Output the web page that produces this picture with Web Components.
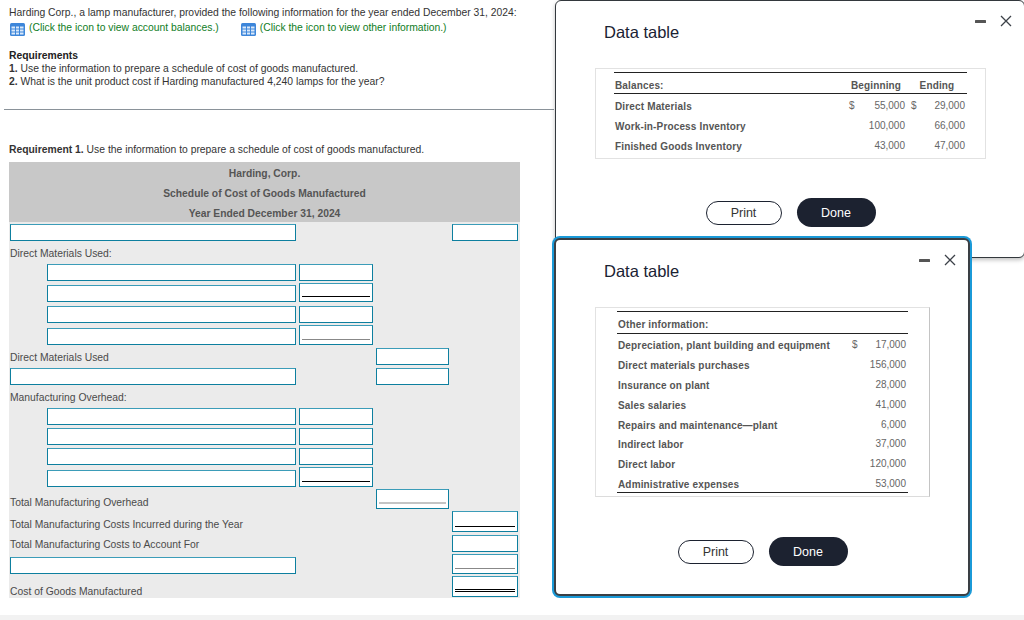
<!DOCTYPE html>
<html lang="en">
<head>
<meta charset="utf-8">
<title>Harding Corp.</title>
<style>
  html, body { margin: 0; height: 620px; overflow: hidden; background: #fff; }
  body { font-family: "Liberation Sans", Arial, sans-serif; position: relative; }
  b { font-weight: bold; }
</style>
</head>
<body>
<problem-pane>
  <span slot="intro">Harding Corp., a lamp manufacturer, provided the following information for the year ended December 31, 2024:</span>
  <info-link slot="link1">(Click the icon to view account balances.)</info-link>
  <info-link slot="link2">(Click the icon to view other information.)</info-link>
  <span slot="req1"><b>1.</b> Use the information to prepare a schedule of cost of goods manufactured.</span>
  <span slot="req2"><b>2.</b> What is the unit product cost if Harding manufactured 4,240 lamps for the year?</span>
  <span slot="req3"><b>Requirement 1.</b> Use the information to prepare a schedule of cost of goods manufactured.</span>

  <schedule-table>
    <span slot="title">Harding, Corp.</span>
    <span slot="title">Schedule of Cost of Goods Manufactured</span>
    <span slot="title">Year Ended December 31, 2024</span>

    <sched-row style="height:19px"><entry-box slot="a"></entry-box><entry-box slot="d"></entry-box></sched-row>
    <sched-row style="height:20px"><sched-label slot="a" style="margin-bottom:0">Direct Materials Used:</sched-label></sched-row>
    <sched-row style="height:20px"><entry-box slot="a" indent></entry-box><entry-box slot="b"></entry-box></sched-row>
    <sched-row style="height:21px"><entry-box slot="a" indent></entry-box><entry-box slot="b" line="single" style="height:19px"></entry-box></sched-row>
    <sched-row style="height:21px"><entry-box slot="a" indent></entry-box><entry-box slot="b"></entry-box></sched-row>
    <sched-row style="height:22px"><entry-box slot="a" indent></entry-box><entry-box slot="b" line="gray" style="height:20px"></entry-box></sched-row>
    <sched-row style="height:20px"><sched-label slot="a" style="margin-bottom:0">Direct Materials Used</sched-label><entry-box slot="c"></entry-box></sched-row>
    <sched-row style="height:20px"><entry-box slot="a"></entry-box><entry-box slot="c"></entry-box></sched-row>
    <sched-row style="height:19px"><sched-label slot="a" style="margin-bottom:-1px">Manufacturing Overhead:</sched-label></sched-row>
    <sched-row style="height:21px"><entry-box slot="a" indent></entry-box><entry-box slot="b"></entry-box></sched-row>
    <sched-row style="height:20px"><entry-box slot="a" indent></entry-box><entry-box slot="b"></entry-box></sched-row>
    <sched-row style="height:20px"><entry-box slot="a" indent></entry-box><entry-box slot="b"></entry-box></sched-row>
    <sched-row style="height:22px"><entry-box slot="a" indent></entry-box><entry-box slot="b" line="single" style="height:20px"></entry-box></sched-row>
    <sched-row style="height:22px"><sched-label slot="a" style="margin-bottom:-1px">Total Manufacturing Overhead</sched-label><entry-box slot="c" line="light" style="height:20px"></entry-box></sched-row>
    <sched-row style="height:23px"><sched-label slot="a" style="margin-bottom:0">Total Manufacturing Costs Incurred during the Year</sched-label><entry-box slot="d" line="single" style="height:21px"></entry-box></sched-row>
    <sched-row style="height:20px"><sched-label slot="a" style="margin-bottom:0">Total Manufacturing Costs to Account For</sched-label><entry-box slot="d"></entry-box></sched-row>
    <sched-row style="height:22px"><entry-box slot="a"></entry-box><entry-box slot="d" line="gray" style="height:20px"></entry-box></sched-row>
    <sched-row style="height:24px"><sched-label slot="a" style="margin-bottom:-1px">Cost of Goods Manufactured</sched-label><entry-box slot="d" line="double" style="height:21px;margin-bottom:1px"></entry-box></sched-row>
  </schedule-table>
</problem-pane>

<data-window style="left:555px;top:0;width:470px;height:258px;--w:391px;--pad:18px;--box-pb:1px;--btn-mt:39px;--cols:235px 62px 56px">
  <data-row head style="--head-h:20px;--head-lh:14px;--head-mb:3px" vals="Beginning;Ending">Balances:</data-row>
  <data-row vals="$|55,000;$|29,000">Direct Materials</data-row>
  <data-row vals="|100,000;|66,000">Work-in-Process Inventory</data-row>
  <data-row vals="|43,000;|47,000">Finished Goods Inventory</data-row>
</data-window>

<data-window focused style="left:554px;top:238px;width:416px;height:358px;--w:335px;--pad:21px;--box-pb:3px;--btn-mt:40px;--cols:235px 56px">
  <data-row head style="--head-h:21px;--head-lh:16px;--head-mb:2px" vals=" ">Other information:</data-row>
  <data-row vals="$|17,000">Depreciation, plant building and equipment</data-row>
  <data-row vals="|156,000">Direct materials purchases</data-row>
  <data-row vals="|28,000">Insurance on plant</data-row>
  <data-row vals="|41,000">Sales salaries</data-row>
  <data-row style="height:19px" vals="|6,000">Repairs and maintenance—plant</data-row>
  <data-row vals="|37,000">Indirect labor</data-row>
  <data-row vals="|120,000">Direct labor</data-row>
  <data-row rule vals="|53,000">Administrative expenses</data-row>
</data-window>

<page-foot></page-foot>

<script>
// left pane: question text and the schedule
class ProblemPane extends HTMLElement {
  constructor() {
    super();
    this.attachShadow({ mode: "open" }).innerHTML = `
      <style>
        :host { display: block; width: 554px; padding: 6px 0 0 9px; box-sizing: border-box;
                font-size: 10.35px; color: #333; }
        .line { line-height: 14px; white-space: nowrap; }
        .links { display: flex; margin: 1px 0 0 1px; line-height: 14px; height: 14px; }
        .links ::slotted(info-link) { margin-right: 22px; }
        .reqs { margin-top: 14px; line-height: 13px; white-space: nowrap; }
        .reqs b { color: #222; }
        hr { border: 0; height: 1px; background: #8a9299; margin: 21px 0 0 -5px; }
        .req1 { margin-top: 33px; line-height: 14px; white-space: nowrap; }
        schedule-slot { display: block; margin: 5px 0 0 0; }
      </style>
      <div class="line"><slot name="intro"></slot></div>
      <div class="links"><slot name="link1"></slot><slot name="link2"></slot></div>
      <div class="reqs">
        <div><b>Requirements</b></div>
        <div><slot name="req1"></slot></div>
        <div><slot name="req2"></slot></div>
      </div>
      <hr>
      <div class="req1"><slot name="req3"></slot></div>
      <schedule-slot><slot></slot></schedule-slot>`;
  }
}

class InfoLink extends HTMLElement {
  constructor() {
    super();
    this.attachShadow({ mode: "open" }).innerHTML = `
      <style>
        :host { display: inline-flex; align-items: flex-start; gap: 4px; color: #0f7d25; white-space: nowrap; }
        svg { display: block; flex: none; margin-top: 2px; }
      </style>
      <svg width="15" height="13" viewBox="0 0 15 13">
        <rect width="15" height="13" rx="1.5" fill="#3d86da"/>
        <path d="M1.5 3.5h3.5v2h-3.5zM6 3.5h3v2h-3zM10 3.5h3.5v2h-3.5zM1.5 6.5h3.5v2h-3.5zM6 6.5h3v2h-3zM10 6.5h3.5v2h-3.5zM1.5 9.5h3.5v2h-3.5zM6 9.5h3v2h-3zM10 9.5h3.5v2h-3.5z" fill="#dbe9fa"/>
      </svg>
      <span><slot></slot></span>`;
  }
}

class ScheduleTable extends HTMLElement {
  constructor() {
    super();
    this.attachShadow({ mode: "open" }).innerHTML = `
      <style>
        :host { display: block; width: 511px; background: #ebebeb; }
        .head { background: #c8c8c8; height: 60px; box-sizing: border-box; padding-top: 1px;
                display: grid; grid-auto-rows: 20px; justify-items: center; align-items: center;
                font-weight: bold; color: #555; font-size: 10.3px; }
        .head ::slotted(span) { display: block; line-height: 20px; padding-top: 1px; }
      </style>
      <div class="head"><slot name="title"></slot></div>
      <slot></slot>`;
  }
}

class SchedRow extends HTMLElement {
  constructor() {
    super();
    this.attachShadow({ mode: "open" }).innerHTML = `
      <style>
        :host { display: grid; grid-template-columns: 286px 74px 73px 66px; column-gap: 3px;
                padding-left: 1px; align-items: end; }
      </style>
      <div><slot name="a"></slot></div>
      <div><slot name="b"></slot></div>
      <div><slot name="c"></slot></div>
      <div><slot name="d"></slot></div>`;
  }
}

class SchedLabel extends HTMLElement {
  constructor() {
    super();
    this.attachShadow({ mode: "open" }).innerHTML = `
      <style>
        :host { display: block; line-height: 14px; white-space: nowrap; color: #4a4a4a; font-size: 10.35px; }
      </style>
      <slot></slot>`;
  }
}

// teal answer box, with the optional underline the form shows inside it
class EntryBox extends HTMLElement {
  constructor() {
    super();
    const line = this.getAttribute("line");
    const rules = {
      single: "border-bottom:1px solid #000;",
      gray: "border-bottom:1px solid #888;",
      light: "border-bottom:2px solid #c4c4c4;",
      double: "border-bottom:3px double #000;"
    };
    this.attachShadow({ mode: "open" }).innerHTML = `
      <style>
        :host { display: block; height: 17px; box-sizing: border-box; background: #fff;
                border: 1px solid #0d7f9f; border-top-color: #3b9cb8; }
        :host([indent]) { margin-left: 37px; }
        div { height: 100%; box-sizing: border-box; margin: 0 2px; padding-bottom: 2px; }
        i { display: block; height: calc(100% - 2px); box-sizing: border-box; ${rules[line] || ""} }
      </style>
      <div><i></i></div>`;
  }
}

class DataWindow extends HTMLElement {
  constructor() {
    super();
    this.attachShadow({ mode: "open" }).innerHTML = `
      <style>
        :host { position: absolute; box-sizing: border-box; background: #fff;
                border: 1px solid #33383d; border-radius: 6px; padding-left: 39px;
                box-shadow: 0 2px 4px rgba(0,0,0,.25); }
        :host([focused]) { border-width: 2px; border-color: #3a3f44;
                box-shadow: 0 0 0 2px #1b9ad8; z-index: 2; }
        .col { width: var(--w); }
        header { display: flex; justify-content: space-between; height: 67px; margin-right: -26px; }
        h2 { margin: 21px 0 0 9px; font-size: 16.5px; line-height: 20px; font-weight: normal; color: #1a2233; }
        .ctl { display: flex; align-items: center; gap: 14px; height: 12px; margin-top: 14px; }
        svg { display: block; }
        .min { margin-top: 1px; }
        .box { border: 1px solid #e2e2e2; padding: 3px var(--pad) var(--box-pb); font-size: 10px; }
        :host([focused]) .box { border-right-color: #c4c4c4; border-bottom-color: #dcdcdc; }
        .btns { display: flex; justify-content: center; align-items: center; gap: 15px; margin-top: var(--btn-mt); }
        button { font: 12.5px "Liberation Sans", Arial, sans-serif; padding: 0; border-radius: 15px; }
        .print { width: 76px; height: 24px; background: #fff; color: #333; border: 1px solid #1c2230; }
        .done { width: 79px; height: 29px; background: #1c2230; color: #fff; border: 0; }
      </style>
      <div class="col">
        <header>
          <h2>Data table</h2>
          <div class="ctl">
            <svg class="min" width="11" height="3" viewBox="0 0 11 3"><rect width="11" height="3" rx=".5" fill="#555"/></svg>
            <svg width="12" height="12" viewBox="0 0 12 12"><path d="M1 1l10 10M11 1L1 11" stroke="#3c4148" stroke-width="1.3" fill="none"/></svg>
          </div>
        </header>
        <div class="box"><slot></slot></div>
        <div class="btns">
          <button class="print">Print</button>
          <button class="done">Done</button>
        </div>
      </div>`;
  }
}

class DataRow extends HTMLElement {
  constructor() {
    super();
    const vals = (this.getAttribute("vals") || "").split(";");
    const cells = vals.map((v) => {
      if (this.hasAttribute("head")) return `<div class="th">${v}</div>`;
      const [sym, num] = v.split("|");
      return `<div class="td"><span>${sym}</span><span>${num}</span></div>`;
    }).join("");
    this.attachShadow({ mode: "open" }).innerHTML = `
      <style>
        :host { display: grid; grid-template-columns: var(--cols); height: 20px; line-height: 20px;
                white-space: nowrap; }
        :host([head]) { height: var(--head-h); line-height: var(--head-lh); align-items: end;
                margin-bottom: var(--head-mb);
                border-top: 1px solid #222; border-bottom: 1px solid #222; }
        :host([rule]) { height: 17px; line-height: 20px; border-bottom: 1px solid #222; }
        .l { padding-left: 1px; font-weight: bold; color: #555; letter-spacing: .15px; }
        .th { font-weight: bold; color: #555; text-align: center; letter-spacing: .15px; padding-right: 4px; }
        .th:not(:last-child) { padding-right: 8px; }
        .td { display: flex; justify-content: space-between; padding-right: 2px; color: #666; line-height: 18px; }
        .td:not(:last-child) { padding-right: 6px; }
      </style>
      <div class="l"><slot></slot></div>${cells}`;
  }
}

class PageFoot extends HTMLElement {
  constructor() {
    super();
    this.attachShadow({ mode: "open" }).innerHTML = `
      <style>
        :host { display: block; position: absolute; left: 0; right: 0; bottom: 0; height: 5px; background: #f2f2f2; }
      </style>`;
  }
}

customElements.define("problem-pane", ProblemPane);
customElements.define("info-link", InfoLink);
customElements.define("schedule-table", ScheduleTable);
customElements.define("sched-row", SchedRow);
customElements.define("sched-label", SchedLabel);
customElements.define("entry-box", EntryBox);
customElements.define("data-window", DataWindow);
customElements.define("data-row", DataRow);
customElements.define("page-foot", PageFoot);
</script>
</body>
</html>
